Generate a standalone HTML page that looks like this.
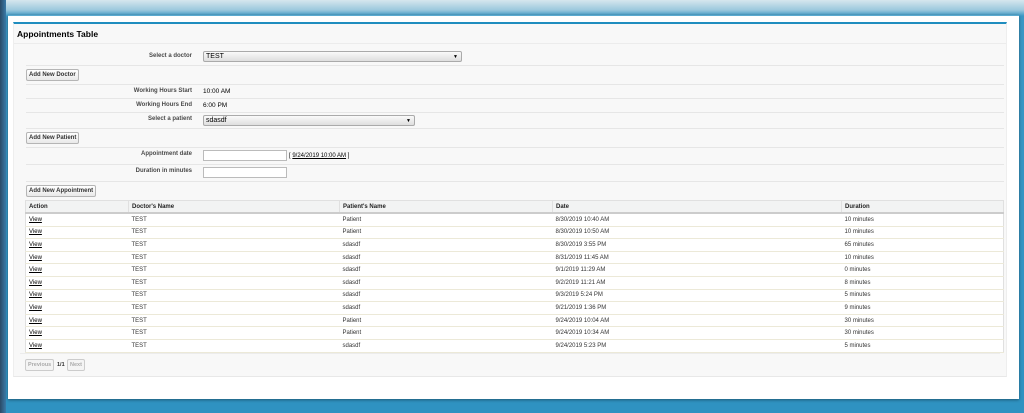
<!DOCTYPE html>
<html><head><style>
body{margin:0;width:1024px;height:413px;overflow:hidden;font-family:"Liberation Sans",Arial,sans-serif;background:linear-gradient(#d6e6ee 0px,#9cc8dd 10px,#3a97c4 16px,#2f92c1 100%);position:relative}
.lb{position:absolute;left:0;top:0;width:6px;height:413px;background:linear-gradient(90deg,#2a4a66,#3a7aa8)}
.card{position:absolute;left:8px;top:15px;width:1011px;height:383px;background:#fff;border-top:1px solid #5aa9cf;box-shadow:0 1px 3px rgba(0,0,0,.4)}
.pan{position:absolute;left:5px;top:6px;width:992px;height:352px;background:#f8f8f8;border-top:2px solid #1f8dbf;border-left:1px solid #eee;border-right:1px solid #eee;border-bottom:1px solid #e8e8e8}
h2{position:absolute;left:3px;top:5px;margin:0;font-size:8.5px;font-weight:bold;color:#000}
.hl{position:absolute;left:0;width:992px;height:1px;background:#ececec}
.row{position:absolute;left:12px;width:978px;height:1px;background:#e6e6e6}
.lbl{position:absolute;width:172px;left:6px;text-align:right;font-size:6px;font-weight:bold;color:#4a4a4a}
.val{position:absolute;left:189px;font-size:6.5px;color:#000}
.btn{position:absolute;left:12px;height:10px;padding:0 2px;border:1px solid #b5b5b5;border-radius:2px;background:linear-gradient(#fff,#e9e9e9);font-size:6px;font-weight:bold;color:#333;line-height:10px}
.sel{position:absolute;left:189px;border:1px solid #aaa;border-radius:2px;background:linear-gradient(#fafafa,#dedede);font-size:7px;line-height:10px;padding-left:2px;box-sizing:border-box;height:11px}
.sel span{position:absolute;right:3px;top:0;font-size:5px}
.inp{position:absolute;left:189px;width:84px;border:1px solid #bbb;background:#fff;box-sizing:border-box;height:11px}
table{position:absolute;left:11px;top:176px;width:979px;border-collapse:collapse;font-size:6px;background:#fff;border:1px solid #e0e0e0}
th{text-align:left;font-weight:bold;color:#222;background:#f2f3f3;height:11px;padding:0 3px;border-bottom:2px solid #ccc;border-right:1px solid #e0e0e0}
td{height:11.6px;padding:0 3px;color:#333;border-bottom:1px solid #ece9d8}
td a{color:#000;text-decoration:underline}
.pg{position:absolute;top:335px;height:10px;border:1px solid #ccc;border-radius:2px;background:#f4f4f4;font-size:5.5px;font-weight:bold;color:#aaa;line-height:10px;padding:0 2px}
</style></head><body>
<div class="lb"></div>
<div class="card"><div class="pan">
<h2>Appointments Table</h2>
<div class="hl" style="top:19px"></div>
<div class="lbl" style="top:29px">Select a doctor</div>
<div class="sel" style="top:27px;width:259px">TEST<span>▼</span></div>
<div class="row" style="top:41px"></div>
<div class="btn" style="top:45px">Add New Doctor</div>
<div class="row" style="top:60px"></div>
<div class="lbl" style="top:64px">Working Hours Start</div><div class="val" style="top:64px">10:00 AM</div>
<div class="row" style="top:74px"></div>
<div class="lbl" style="top:78px">Working Hours End</div><div class="val" style="top:78px">6:00 PM</div>
<div class="row" style="top:88px"></div>
<div class="lbl" style="top:92px">Select a patient</div>
<div class="sel" style="top:91px;width:212px">sdasdf<span>▼</span></div>
<div class="row" style="top:104px"></div>
<div class="btn" style="top:108px">Add New Patient</div>
<div class="row" style="top:123px"></div>
<div class="lbl" style="top:127px">Appointment date</div>
<div class="inp" style="top:126px"></div>
<div class="val" style="left:275px;top:129px;font-size:6px">[ <u>9/24/2019 10:00 AM</u> ]</div>
<div class="row" style="top:140px"></div>
<div class="lbl" style="top:144px">Duration in minutes</div>
<div class="inp" style="top:143px"></div>
<div class="row" style="top:157px"></div>
<div class="btn" style="top:161px">Add New Appointment</div>
<table>
<tr><th style="width:96px">Action</th><th style="width:204px">Doctor's Name</th><th style="width:206px">Patient's Name</th><th style="width:282px">Date</th><th>Duration</th></tr>
<tr><td><a>View</a></td><td>TEST</td><td>Patient</td><td>8/30/2019 10:40 AM</td><td>10 minutes</td></tr>
<tr><td><a>View</a></td><td>TEST</td><td>Patient</td><td>8/30/2019 10:50 AM</td><td>10 minutes</td></tr>
<tr><td><a>View</a></td><td>TEST</td><td>sdasdf</td><td>8/30/2019 3:55 PM</td><td>65 minutes</td></tr>
<tr><td><a>View</a></td><td>TEST</td><td>sdasdf</td><td>8/31/2019 11:45 AM</td><td>10 minutes</td></tr>
<tr><td><a>View</a></td><td>TEST</td><td>sdasdf</td><td>9/1/2019 11:29 AM</td><td>0 minutes</td></tr>
<tr><td><a>View</a></td><td>TEST</td><td>sdasdf</td><td>9/2/2019 11:21 AM</td><td>8 minutes</td></tr>
<tr><td><a>View</a></td><td>TEST</td><td>sdasdf</td><td>9/3/2019 5:24 PM</td><td>5 minutes</td></tr>
<tr><td><a>View</a></td><td>TEST</td><td>sdasdf</td><td>9/21/2019 1:36 PM</td><td>9 minutes</td></tr>
<tr><td><a>View</a></td><td>TEST</td><td>Patient</td><td>9/24/2019 10:04 AM</td><td>30 minutes</td></tr>
<tr><td><a>View</a></td><td>TEST</td><td>Patient</td><td>9/24/2019 10:34 AM</td><td>30 minutes</td></tr>
<tr><td><a>View</a></td><td>TEST</td><td>sdasdf</td><td>9/24/2019 5:23 PM</td><td>5 minutes</td></tr>
</table>
<div class="hl" style="top:329px;left:6px;width:980px"></div>
<div class="pg" style="left:11px">Previous</div>
<div style="position:absolute;left:43px;top:338px;font-size:5.5px;font-weight:bold;color:#333">1/1</div>
<div class="pg" style="left:53px">Next</div>
</div></div>
</body></html>
